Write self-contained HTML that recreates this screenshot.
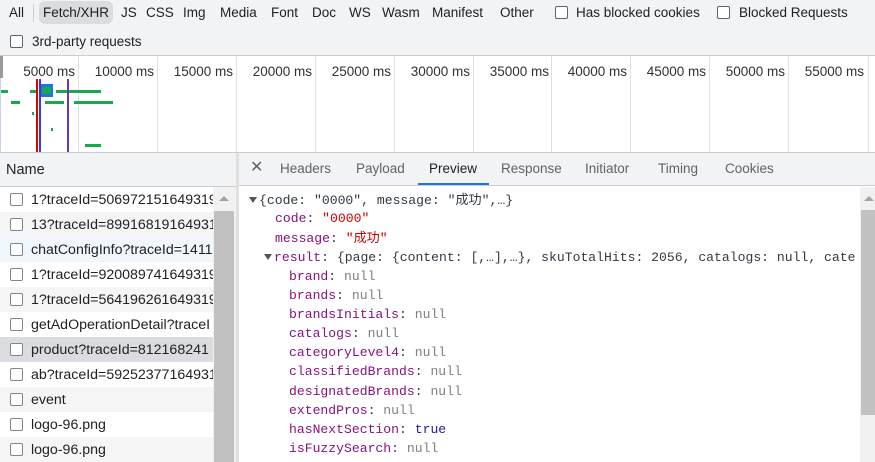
<!DOCTYPE html><html><head><meta charset="utf-8"><style>
*{margin:0;padding:0;box-sizing:border-box}
body{width:875px;height:462px;overflow:hidden;background:#fff;font-family:"Liberation Sans","Noto Sans CJK SC",sans-serif;font-size:13.5px;color:#202124;position:relative;line-height:16px}
.a{position:absolute;white-space:nowrap}
.cb{position:absolute;width:13px;height:13px;border:1px solid #5f6368;border-radius:2px;background:#fff}
.gl{position:absolute;top:56px;width:1px;height:96px;background:#e0e0e0}
.tl{position:absolute;top:64px;font-size:13.5px;color:#303030;text-align:right;width:70px}
.row{position:absolute;left:0;width:213px;height:25px;overflow:hidden}
.row .cb{left:10px;top:6px;border-color:#80868b}
.row span{position:absolute;left:31px;top:5px;white-space:nowrap;color:#202124;font-size:14.2px}
.m{font-family:"Liberation Mono","Noto Sans CJK SC",monospace;font-size:13.1px;line-height:16px}
.k{color:#881280}.s{color:#c80000}.n{color:#808080}.c{color:#303942}
.ln{position:absolute;white-space:nowrap;height:16px;line-height:16px}
.g{position:absolute;background:#1aa84f;height:3px}
.tri{display:inline-block;width:0;height:0;border-left:4px solid transparent;border-right:4px solid transparent;border-top:6px solid #555;margin-right:2px;vertical-align:1px}
</style></head><body>
<div class="a" style="left:0;top:0;width:875px;height:56px;background:#f1f3f4;border-bottom:1px solid #cbcdd1"></div>
<div class="a" style="left:9px;top:5px">All</div>
<div class="a" style="left:33px;top:4px;width:1px;height:18px;background:#cbcdd1"></div>
<div class="a" style="left:39px;top:1px;width:74px;height:23px;background:#dadce0;border-radius:6px"></div>
<div class="a" style="left:43px;top:5px">Fetch/XHR</div>
<div class="a" style="left:121px;top:5px">JS</div>
<div class="a" style="left:146px;top:5px">CSS</div>
<div class="a" style="left:183px;top:5px">Img</div>
<div class="a" style="left:220px;top:5px">Media</div>
<div class="a" style="left:271px;top:5px">Font</div>
<div class="a" style="left:312px;top:5px">Doc</div>
<div class="a" style="left:349px;top:5px">WS</div>
<div class="a" style="left:382px;top:5px">Wasm</div>
<div class="a" style="left:432px;top:5px">Manifest</div>
<div class="a" style="left:500px;top:5px">Other</div>
<div class="cb" style="left:555px;top:6px"></div>
<div class="a" style="left:576px;top:5px">Has blocked cookies</div>
<div class="cb" style="left:717px;top:6px"></div>
<div class="a" style="left:739px;top:5px">Blocked Requests</div>
<div class="cb" style="left:10px;top:35px"></div>
<div class="a" style="left:32px;top:34px">3rd-party requests</div>
<div class="a" style="left:0;top:56px;width:3px;height:22px;background:#9a9a9a"></div>
<div class="a" style="left:0;top:78px;width:1px;height:74px;background:#c8d4e8"></div>
<div class="gl" style="left:78px"></div><div class="gl" style="left:157px"></div><div class="gl" style="left:236px"></div><div class="gl" style="left:315px"></div><div class="gl" style="left:394px"></div><div class="gl" style="left:473px"></div><div class="gl" style="left:551px"></div><div class="gl" style="left:630px"></div><div class="gl" style="left:709px"></div><div class="gl" style="left:788px"></div><div class="gl" style="left:868px"></div>
<div class="tl" style="left:5px">5000 ms</div><div class="tl" style="left:84px">10000 ms</div><div class="tl" style="left:163px">15000 ms</div><div class="tl" style="left:242px">20000 ms</div><div class="tl" style="left:321px">25000 ms</div><div class="tl" style="left:400px">30000 ms</div><div class="tl" style="left:479px">35000 ms</div><div class="tl" style="left:557px">40000 ms</div><div class="tl" style="left:636px">45000 ms</div><div class="tl" style="left:715px">50000 ms</div><div class="tl" style="left:794px">55000 ms</div>
<div class="g" style="left:1px;top:90px;width:7px"></div>
<div class="g" style="left:30px;top:90px;width:6px"></div>
<div class="g" style="left:56px;top:90px;width:45px"></div>
<div class="g" style="left:11px;top:101px;width:9px"></div>
<div class="g" style="left:45px;top:101px;width:19px"></div>
<div class="g" style="left:74px;top:101px;width:39px"></div>
<div class="g" style="left:32px;top:112px;width:2px"></div>
<div class="g" style="left:51px;top:128px;width:2px"></div>
<div class="g" style="left:85px;top:144px;width:16px"></div>
<div class="a" style="left:39px;top:84px;width:14px;height:13px;background:#1a73e8"></div>
<div class="a" style="left:42px;top:87px;width:9px;height:7px;background:#1aa84f"></div>
<div class="a" style="left:36px;top:79px;width:2px;height:73px;background:#d00"></div>
<div class="a" style="left:39px;top:79px;width:2px;height:73px;background:#3c3cc8"></div>
<div class="a" style="left:67px;top:79px;width:2px;height:73px;background:#6a3ab0"></div>
<div class="a" style="left:0;top:152px;width:875px;height:1px;background:#cbcdd1"></div>
<div class="a" style="left:0;top:153px;width:238px;height:309px;background:#f1f3f4"></div>
<div class="a" style="left:6px;top:162px;font-size:14.5px">Name</div>
<div class="a" style="left:0;top:186px;width:238px;height:1px;background:#cbcdd1"></div>
<div class="row" style="top:187px;background:#fff"><div class="cb"></div><span>1?traceId=506972151649319</span></div>
<div class="row" style="top:212px;background:#f5f5f5"><div class="cb"></div><span>13?traceId=89916819164931</span></div>
<div class="row" style="top:237px;background:#f1f5fd"><div class="cb"></div><span>chatConfigInfo?traceId=1411</span></div>
<div class="row" style="top:262px;background:#fff"><div class="cb"></div><span>1?traceId=920089741649319</span></div>
<div class="row" style="top:287px;background:#f5f5f5"><div class="cb"></div><span>1?traceId=564196261649319</span></div>
<div class="row" style="top:312px;background:#fff"><div class="cb"></div><span>getAdOperationDetail?traceI</span></div>
<div class="row" style="top:337px;background:#dadce0"><div class="cb"></div><span>product?traceId=812168241</span></div>
<div class="row" style="top:362px;background:#fff"><div class="cb"></div><span>ab?traceId=59252377164931</span></div>
<div class="row" style="top:387px;background:#f5f5f5"><div class="cb"></div><span>event</span></div>
<div class="row" style="top:412px;background:#fff"><div class="cb"></div><span>logo-96.png</span></div>
<div class="row" style="top:437px;background:#f5f5f5"><div class="cb"></div><span>logo-96.png</span></div>
<div class="a" style="left:213px;top:187px;width:22px;height:275px;background:#f1f1f1"></div>
<div class="a" style="left:214px;top:211px;width:20px;height:251px;background:#c1c1c1"></div>
<div class="a" style="left:219px;top:196px;width:0;height:0;border-left:5px solid transparent;border-right:5px solid transparent;border-bottom:5px solid #a3a3a3"></div>
<div class="a" style="left:236px;top:153px;width:3px;height:309px;background:#e0e0e0"></div>
<div class="a" style="left:239px;top:153px;width:636px;height:33px;background:#f1f3f4;border-bottom:1px solid #cbcdd1"></div>
<div class="a" style="left:250px;top:160px;font-size:16px;color:#5f6368">✕</div>
<div class="a" style="left:280px;top:161px;color:#5f6368">Headers</div>
<div class="a" style="left:356px;top:161px;color:#5f6368">Payload</div>
<div class="a" style="left:429px;top:161px;color:#202124">Preview</div>
<div class="a" style="left:418px;top:183px;width:71px;height:2px;background:#1a73e8"></div>
<div class="a" style="left:501px;top:161px;color:#5f6368">Response</div>
<div class="a" style="left:585px;top:161px;color:#5f6368">Initiator</div>
<div class="a" style="left:658px;top:161px;color:#5f6368">Timing</div>
<div class="a" style="left:725px;top:161px;color:#5f6368">Cookies</div>
<div class="m c">
<div class="ln" style="left:249px;top:193px"><span class="tri"></span>{code: "0000", message: "成功",…}</div>
<div class="ln" style="left:275px;top:211px"><span class="k">code</span>: <span class="s">"0000"</span></div>
<div class="ln" style="left:275px;top:231px"><span class="k">message</span>: <span class="s">"成功"</span></div>
<div class="ln" style="left:264px;top:250px"><span class="tri"></span><span class="k">result</span>: {page: {content: [,…],…}, skuTotalHits: 2056, catalogs: null, cate</div>
<div class="ln" style="left:289px;top:269px"><span class="k">brand</span>: <span class="n">null</span></div>
<div class="ln" style="left:289px;top:288px"><span class="k">brands</span>: <span class="n">null</span></div>
<div class="ln" style="left:289px;top:307px"><span class="k">brandsInitials</span>: <span class="n">null</span></div>
<div class="ln" style="left:289px;top:326px"><span class="k">catalogs</span>: <span class="n">null</span></div>
<div class="ln" style="left:289px;top:345px"><span class="k">categoryLevel4</span>: <span class="n">null</span></div>
<div class="ln" style="left:289px;top:364px"><span class="k">classifiedBrands</span>: <span class="n">null</span></div>
<div class="ln" style="left:289px;top:384px"><span class="k">designatedBrands</span>: <span class="n">null</span></div>
<div class="ln" style="left:289px;top:403px"><span class="k">extendPros</span>: <span class="n">null</span></div>
<div class="ln" style="left:289px;top:422px"><span class="k">hasNextSection</span>: <span style="color:#1a1aa6">true</span></div>
<div class="ln" style="left:289px;top:441px"><span class="k">isFuzzySearch</span>: <span class="n">null</span></div>
</div>
<div class="a" style="left:860px;top:187px;width:15px;height:275px;background:#f1f1f1"></div>
<div class="a" style="left:861px;top:210px;width:14px;height:205px;background:#c1c1c1"></div>
<div class="a" style="left:864px;top:196px;width:0;height:0;border-left:5px solid transparent;border-right:5px solid transparent;border-bottom:5px solid #a3a3a3"></div>
</body></html>
